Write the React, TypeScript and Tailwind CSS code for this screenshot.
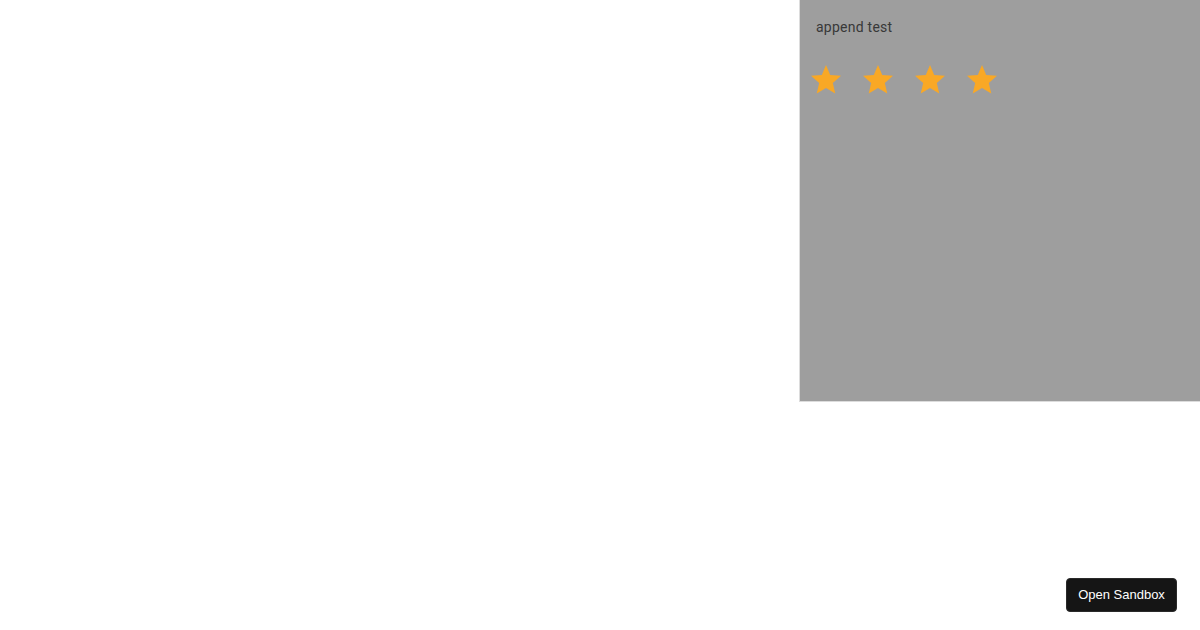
import React from "react";

const Star = () => (
  <svg viewBox="0 0 24 24" width="36" height="36" className="block shrink-0">
    <path fill="#f9a825" d="M12 17.27L18.18 21l-1.64-7.03L22 9.24l-7.19-.61L12 2 9.19 8.63 2 9.24l5.46 4.73L5.82 21z" />
  </svg>
);

export default function App() {
  return (
    <div className="relative w-[1200px] h-[630px] bg-white overflow-hidden" style={{ fontFamily: "Roboto, 'Liberation Sans', sans-serif" }}>
      <div className="flex justify-end">
        <div className="w-[401px] h-[402px] bg-[#9e9e9e] border-l border-b border-[#dcdcdc] flex flex-col">
          <div className="pl-[16px] pt-[17px] text-[14px] leading-[20px] tracking-[0.25px] text-[#383838]">append test</div>
          <div className="flex gap-[16px] pl-[8px] pt-[25px]">
            <Star />
            <Star />
            <Star />
            <Star />
          </div>
        </div>
      </div>
      <button className="absolute left-[1066px] top-[578px] w-[111px] h-[34px] rounded-[4px] bg-[#151515] text-white text-[13px] border border-[#2a2a2a]" style={{ fontFamily: "'Liberation Sans', Arial, sans-serif" }}>
        Open Sandbox
      </button>
    </div>
  );
}
